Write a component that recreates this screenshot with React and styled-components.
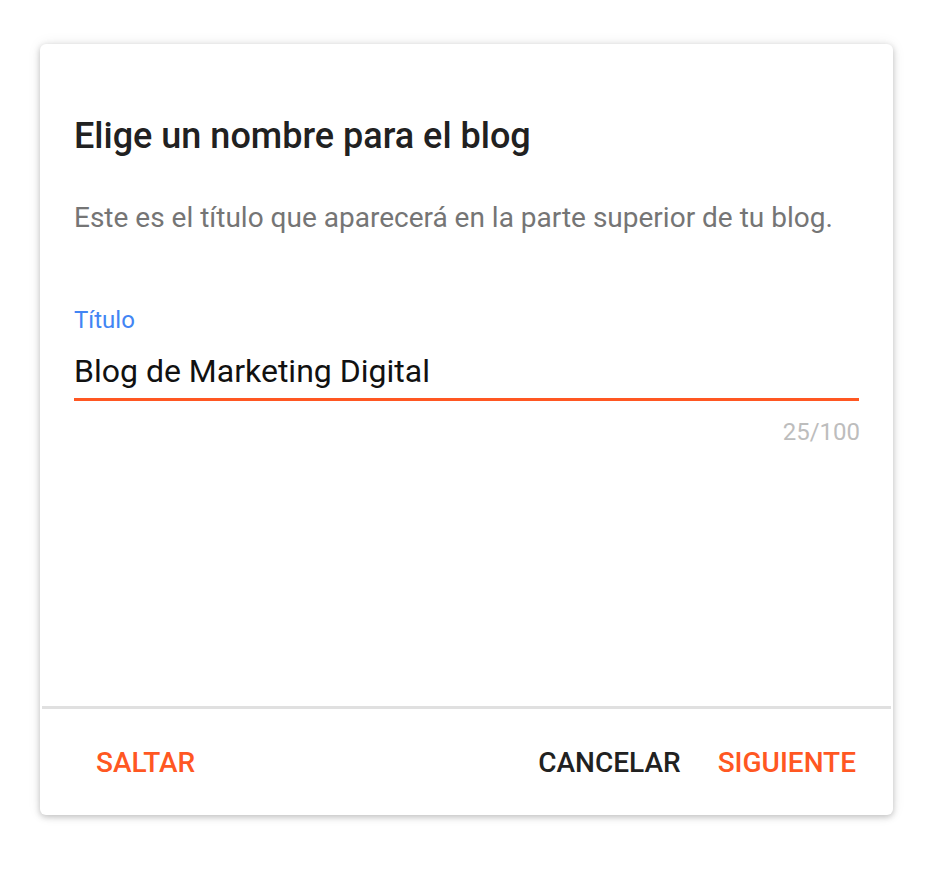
import React from "react";
import styled, { createGlobalStyle } from "styled-components";

const Global = createGlobalStyle`
  html, body { margin: 0; padding: 0; background: #ffffff; }
  body { font-family: Roboto, "Noto Sans", Arial, sans-serif; -webkit-font-smoothing: antialiased; }
`;

const Page = styled.div`
  padding: 44px 0 0 40px;
  width: 940px;
  height: 870px;
  box-sizing: border-box;
`;

const Card = styled.div`
  width: 853px;
  height: 771px;
  background: #fff;
  border-radius: 6px;
  box-shadow: 0 2px 6px rgba(0, 0, 0, 0.22), 0 0 14px rgba(0, 0, 0, 0.08);
  display: flex;
  flex-direction: column;
  box-sizing: border-box;
  overflow: hidden;
`;

const Body = styled.div`
  flex: 1;
  padding: 70px 34px 0 34px;
  display: flex;
  flex-direction: column;
`;

const Title = styled.h2`
  margin: 0;
  font-size: 36px;
  line-height: 44px;
  font-weight: 500;
  color: #212121;
`;

const Subtitle = styled.p`
  margin: 42px 0 0 0;
  font-size: 28px;
  line-height: 36px;
  font-weight: 400;
  color: #757575;
`;

const Field = styled.div`
  margin-top: 70px;
  display: flex;
  flex-direction: column;
`;

const Label = styled.label`
  font-size: 24px;
  line-height: 28px;
  color: #4285f4;
`;

const Input = styled.div`
  margin-top: 17px;
  font-size: 32px;
  line-height: 40px;
  color: #111;
  padding-bottom: 7px;
  border-bottom: 3px solid #ff5722;
`;

const Counter = styled.div`
  margin-top: 17px;
  align-self: flex-end;
  margin-right: -1px;
  font-size: 24px;
  line-height: 28px;
  color: #bdbdbd;
`;

const Divider = styled.div`
  height: 3px;
  margin: 0 2px;
  background: #e0e0e0;
`;

const Footer = styled.div`
  height: 106px;
  display: flex;
  align-items: center;
  padding: 0 25px 0 44px;
  gap: 13px;
`;

const Spacer = styled.div`
  flex: 1;
`;

const Button = styled.button`
  border: none;
  background: transparent;
  padding: 0 12px;
  height: 56px;
  font-family: Roboto, "Noto Sans", Arial, sans-serif;
  font-size: 28px;
  font-weight: 500;
  letter-spacing: 0;
  text-transform: uppercase;
  color: ${(p) => (p.$accent ? "#ff5722" : "#212121")};
  cursor: pointer;
`;

export default function App() {
  return (
    <>
      <Global />
      <Page>
        <Card>
          <Body>
            <Title>Elige un nombre para el blog</Title>
            <Subtitle>
              Este es el título que aparecerá en la parte superior de tu blog.
            </Subtitle>
            <Field>
              <Label>Título</Label>
              <Input>Blog de Marketing Digital</Input>
              <Counter>25/100</Counter>
            </Field>
          </Body>
          <Divider />
          <Footer>
            <Button $accent>Saltar</Button>
            <Spacer />
            <Button>Cancelar</Button>
            <Button $accent>Siguiente</Button>
          </Footer>
        </Card>
      </Page>
    </>
  );
}
